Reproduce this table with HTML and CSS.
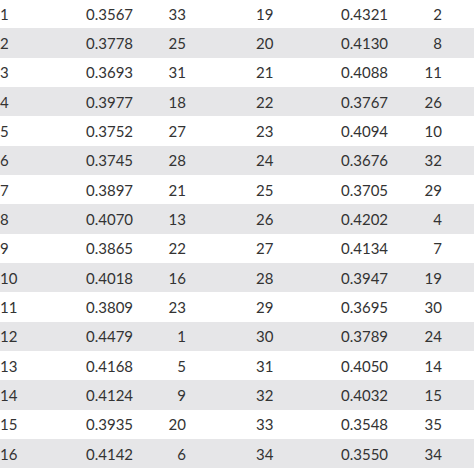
FILE: index.html
```html
<!DOCTYPE html>
<html>
<head>
<meta charset="utf-8">
<link rel="stylesheet" href="styles.css">
</head>
<body>
<table class="data">
<colgroup>
<col class="c1"><col class="c2"><col class="c3"><col class="c4"><col class="c5"><col class="c6"><col class="c7">
</colgroup>
<tbody>
<tr><td>1</td><td>0.3567</td><td class="r">33</td><td class="g">19</td><td>0.4321</td><td class="r">2</td><td></td></tr>
<tr><td>2</td><td>0.3778</td><td class="r">25</td><td class="g">20</td><td>0.4130</td><td class="r">8</td><td></td></tr>
<tr><td>3</td><td>0.3693</td><td class="r">31</td><td class="g">21</td><td>0.4088</td><td class="r">11</td><td></td></tr>
<tr><td>4</td><td>0.3977</td><td class="r">18</td><td class="g">22</td><td>0.3767</td><td class="r">26</td><td></td></tr>
<tr><td>5</td><td>0.3752</td><td class="r">27</td><td class="g">23</td><td>0.4094</td><td class="r">10</td><td></td></tr>
<tr><td>6</td><td>0.3745</td><td class="r">28</td><td class="g">24</td><td>0.3676</td><td class="r">32</td><td></td></tr>
<tr><td>7</td><td>0.3897</td><td class="r">21</td><td class="g">25</td><td>0.3705</td><td class="r">29</td><td></td></tr>
<tr><td>8</td><td>0.4070</td><td class="r">13</td><td class="g">26</td><td>0.4202</td><td class="r">4</td><td></td></tr>
<tr><td>9</td><td>0.3865</td><td class="r">22</td><td class="g">27</td><td>0.4134</td><td class="r">7</td><td></td></tr>
<tr><td>10</td><td>0.4018</td><td class="r">16</td><td class="g">28</td><td>0.3947</td><td class="r">19</td><td></td></tr>
<tr><td>11</td><td>0.3809</td><td class="r">23</td><td class="g">29</td><td>0.3695</td><td class="r">30</td><td></td></tr>
<tr><td>12</td><td>0.4479</td><td class="r">1</td><td class="g">30</td><td>0.3789</td><td class="r">24</td><td></td></tr>
<tr><td>13</td><td>0.4168</td><td class="r">5</td><td class="g">31</td><td>0.4050</td><td class="r">14</td><td></td></tr>
<tr><td>14</td><td>0.4124</td><td class="r">9</td><td class="g">32</td><td>0.4032</td><td class="r">15</td><td></td></tr>
<tr><td>15</td><td>0.3935</td><td class="r">20</td><td class="g">33</td><td>0.3548</td><td class="r">35</td><td></td></tr>
<tr><td>16</td><td>0.4142</td><td class="r">6</td><td class="g">34</td><td>0.3550</td><td class="r">34</td><td></td></tr>
</tbody>
</table>
</body>
</html>
```
FILE: styles.css
```css
html, body {
  margin: 0;
  padding: 0;
  background: #ffffff;
}
.data {
  margin-top: -1px;
  border-collapse: collapse;
  table-layout: fixed;
  width: 474px;
  font-family: Lato, "Liberation Sans", sans-serif;
  font-size: 15px;
  color: #333333;
}
.c1 { width: 86px; }
.c2 { width: 80px; }
.c3 { width: 20px; }
.c4 { width: 155px; }
.c5 { width: 80px; }
.c6 { width: 21px; }
.c7 { width: 32px; }
.data td {
  height: 29.33px;
  padding: 0;
  text-align: left;
  white-space: nowrap;
  vertical-align: middle;
}
.data td.r {
  text-align: right;
}
.data td.g {
  padding-left: 70px;
}
.data tr:nth-child(even) td {
  background: #e6e6e8;
}
```
